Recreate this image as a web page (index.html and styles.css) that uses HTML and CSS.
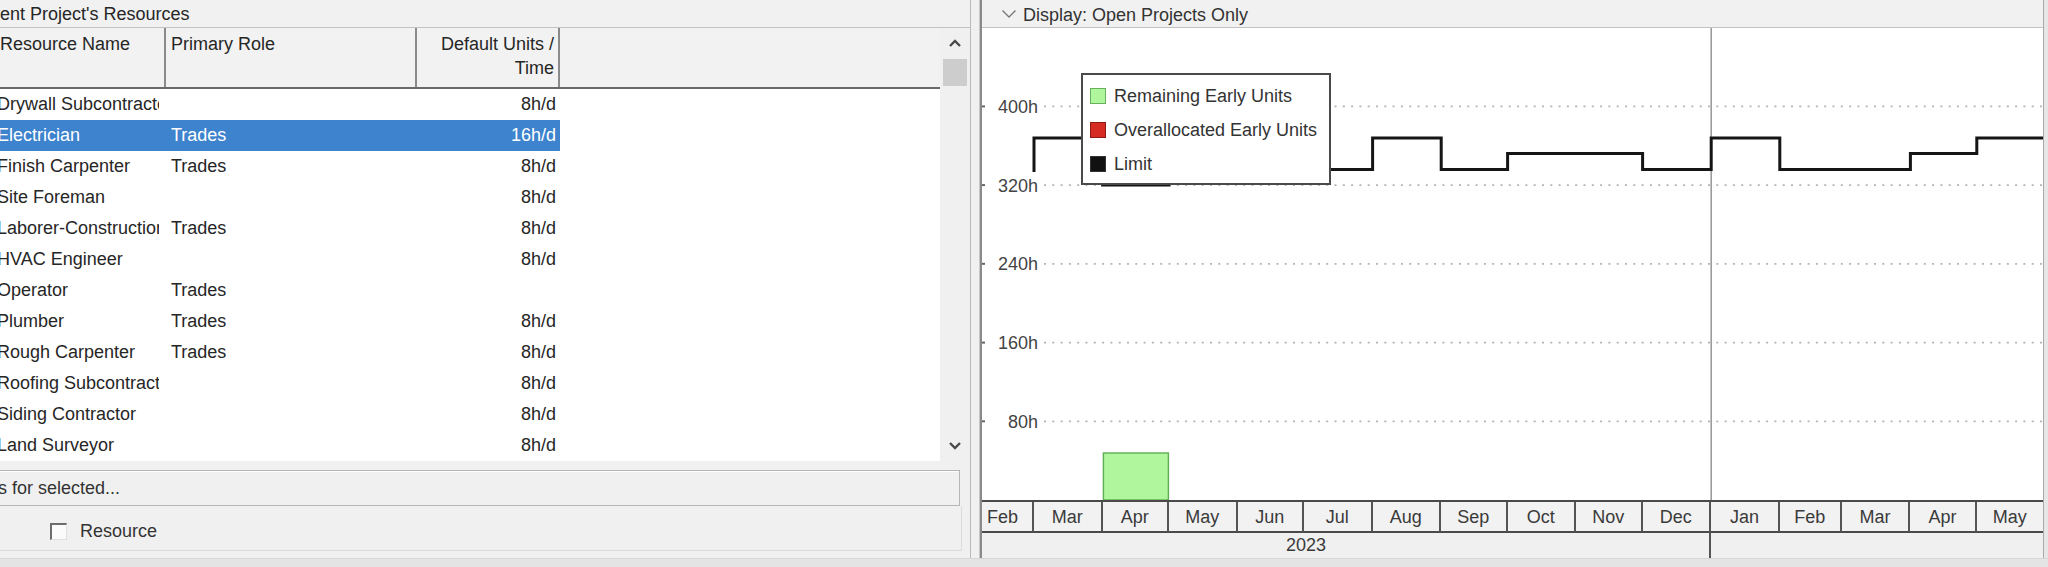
FILE: index.html
```html
<!DOCTYPE html>
<html lang="en">
<head>
    <meta charset="UTF-8">
    <title>Resource Usage Profile</title>
    <link rel="stylesheet" href="styles.css">
</head>
<body>
    <div class="app">
        <!-- left: resource list -->
        <section class="res-pane">
            <div class="pane-title"><span class="res-title">Current Project's Resources</span></div>

            <div class="grid-wrap">
                <div class="grid">
                    <div class="row head">
                        <div class="c name">Resource Name</div>
                        <div class="c role">Primary Role</div>
                        <div class="c units">Default Units /<br>Time</div>
                        <div class="c fill"></div>
                    </div>
                    <div class="row"><div class="c name"><span>Drywall Subcontractor</span></div><div class="c role"></div><div class="c units">8h/d</div></div>
                    <div class="row sel"><div class="c name"><span>Electrician</span></div><div class="c role">Trades</div><div class="c units">16h/d</div></div>
                    <div class="row"><div class="c name"><span>Finish Carpenter</span></div><div class="c role">Trades</div><div class="c units">8h/d</div></div>
                    <div class="row"><div class="c name"><span>Site Foreman</span></div><div class="c role"></div><div class="c units">8h/d</div></div>
                    <div class="row"><div class="c name"><span>Laborer-Construction</span></div><div class="c role">Trades</div><div class="c units">8h/d</div></div>
                    <div class="row"><div class="c name"><span>HVAC Engineer</span></div><div class="c role"></div><div class="c units">8h/d</div></div>
                    <div class="row"><div class="c name"><span>Operator</span></div><div class="c role">Trades</div><div class="c units"></div></div>
                    <div class="row"><div class="c name"><span>Plumber</span></div><div class="c role">Trades</div><div class="c units">8h/d</div></div>
                    <div class="row"><div class="c name"><span>Rough Carpenter</span></div><div class="c role">Trades</div><div class="c units">8h/d</div></div>
                    <div class="row"><div class="c name"><span>Roofing Subcontractor</span></div><div class="c role"></div><div class="c units">8h/d</div></div>
                    <div class="row"><div class="c name"><span>Siding Contractor</span></div><div class="c role"></div><div class="c units">8h/d</div></div>
                    <div class="row"><div class="c name"><span>Land Surveyor</span></div><div class="c role"></div><div class="c units">8h/d</div></div>
                </div>

                <div class="vscroll">
                    <div class="sb-btn">
                        <svg width="14" height="10" viewBox="0 0 14 10"><polyline points="2,8 7,3 12,8" fill="none" stroke="#4a4a4a" stroke-width="2.4"/></svg>
                    </div>
                    <div class="sb-thumb"></div>
                    <div class="sb-track"></div>
                    <div class="sb-btn">
                        <svg width="14" height="10" viewBox="0 0 14 10"><polyline points="2,2 7,7 12,2" fill="none" stroke="#4a4a4a" stroke-width="2.4"/></svg>
                    </div>
                </div>
            </div>

            <div class="sel-box"><span class="sel-text">Display Activities for selected...</span></div>

            <div class="check-box">
                <label class="check"><span class="tick"></span>Resource</label>
            </div>
        </section>

        <div class="splitter"></div>

        <!-- right: usage profile -->
        <section class="chart-pane">
            <div class="pane-title chart-title">
                <svg class="chev" width="16" height="10" viewBox="0 0 16 10"><polyline points="1.5,1.5 8,8 14.5,1.5" fill="none" stroke="#777" stroke-width="1.3"/></svg>
                Display: Open Projects Only
            </div>

            <div class="plot">
                <svg width="1061" height="472" viewBox="0 0 1061 472">
                    <g stroke="#b4b4b4" stroke-width="1.8" stroke-dasharray="2 6.3">
                        <line x1="62" y1="78.4" x2="1061" y2="78.4"/>
                        <line x1="62" y1="157.1" x2="1061" y2="157.1"/>
                        <line x1="62" y1="235.8" x2="1061" y2="235.8"/>
                        <line x1="62" y1="314.6" x2="1061" y2="314.6"/>
                        <line x1="62" y1="393.3" x2="1061" y2="393.3"/>
                    </g>
                    <g stroke="#666" stroke-width="2">
                        <line x1="0" y1="78.4" x2="3" y2="78.4"/>
                        <line x1="0" y1="157.1" x2="3" y2="157.1"/>
                        <line x1="0" y1="235.8" x2="3" y2="235.8"/>
                        <line x1="0" y1="314.6" x2="3" y2="314.6"/>
                        <line x1="0" y1="393.3" x2="3" y2="393.3"/>
                    </g>
                    <g class="ylab" text-anchor="end">
                        <text x="56" y="85">400h</text>
                        <text x="56" y="163.6">320h</text>
                        <text x="56" y="242.3">240h</text>
                        <text x="56" y="321.1">160h</text>
                        <text x="56" y="399.8">80h</text>
                    </g>
                    <!-- year boundary -->
                    <line x1="729.2" y1="0" x2="729.2" y2="472" stroke="#9c9c9c" stroke-width="1.6"/>
                    <!-- remaining early units, Apr -->
                    <rect x="121.4" y="425" width="65" height="47" fill="#aff69c" stroke="#5fae55" stroke-width="1.4"/>
                    <!-- limit -->
                    <path d="M52,144 V109.9 H120.6 V157.1 H187 V109.9 H255.6 V125.6 H322 V141.4 H390.6 V109.9 H459.2 V141.4 H525.6 V125.6 H660.6 V141.4 H729.2 V109.9 H797.8 V141.4 H928.4 V125.6 H994.8 V109.9 H1061"
                          fill="none" stroke="#151515" stroke-width="3"/>
                </svg>

                <div class="legend">
                    <div class="lg-item"><span class="sw green"></span>Remaining Early Units</div>
                    <div class="lg-item"><span class="sw red"></span>Overallocated Early Units</div>
                    <div class="lg-item"><span class="sw black"></span>Limit</div>
                </div>
            </div>

            <div class="months">
                <div class="m first">Feb</div>
                <div class="m">Mar</div>
                <div class="m">Apr</div>
                <div class="m">May</div>
                <div class="m">Jun</div>
                <div class="m">Jul</div>
                <div class="m">Aug</div>
                <div class="m">Sep</div>
                <div class="m">Oct</div>
                <div class="m">Nov</div>
                <div class="m">Dec</div>
                <div class="m">Jan</div>
                <div class="m">Feb</div>
                <div class="m">Mar</div>
                <div class="m">Apr</div>
                <div class="m last">May</div>
            </div>

            <div class="years">
                <div class="y y2023"><span class="y-label">2023</span></div>
                <div class="y"></div>
            </div>
        </section>
    </div>
    <div class="statusband"></div>
</body>
</html>
```

FILE: styles.css
```css
* {
    box-sizing: border-box;
}
body {
    margin: 0;
    width: 2048px;
    height: 567px;
    overflow: hidden;
    background: #e6e6e6;
    font-family: "Liberation Sans", Arial, sans-serif;
    font-size: 18px;
    color: #262626;
}
.app {
    display: flex;
    height: 558px;
}

/* ---- left pane ---- */
.res-pane {
    width: 971px;
    display: flex;
    flex-direction: column;
    background: #f0f0f0;
    border-right: 1px solid #b9b9b9;
    overflow: hidden;
}
.pane-title {
    height: 28px;
    line-height: 28px;
    background: #f1f1f1;
    border-bottom: 1px solid #c2c2c2;
    white-space: nowrap;
    overflow: hidden;
}
.res-title {
    display: block;
    margin-left: -35px;
}
.grid-wrap {
    display: flex;
    height: 433px;
}
.grid {
    width: 940px;
    background: #fff;
    overflow: hidden;
}
.row {
    display: grid;
    grid-template-columns: 166px 251px 143px 1fr;
    height: 31px;
    line-height: 31px;
    white-space: nowrap;
}
.row .c {
    overflow: hidden;
}
.row .name span {
    display: block;
    overflow: hidden;
    margin-left: -3px;
    margin-right: 7px;
}
.row .role {
    padding-left: 5px;
}
.row .units {
    text-align: right;
    padding-right: 4px;
}
.row.sel .c {
    background: #3d83cd;
    color: #fff;
}
.row.head {
    height: 61px;
    line-height: 24px;
    background: #f2f2f2;
    border-bottom: 2px solid #6a6a6a;
}
.row.head .c {
    padding-top: 4px;
    border-right: 2px solid #8a8a8a;
}
.row.head .fill {
    border-right: none;
}
.vscroll {
    width: 30px;
    display: flex;
    flex-direction: column;
    align-items: center;
    background: #f0f0f0;
}
.sb-btn {
    height: 30px;
    display: flex;
    align-items: center;
    justify-content: center;
}
.sb-thumb {
    width: 24px;
    height: 27px;
    margin-top: 1px;
    background: #cdcdcd;
}
.sb-track {
    flex: 1;
}
.sel-box {
    width: 960px;
    height: 36px;
    margin-top: 9px;
    line-height: 34px;
    border-top: 1px solid #b5b5b5;
    border-bottom: 1px solid #b5b5b5;
    border-right: 1px solid #b5b5b5;
    box-shadow: inset 0 1px 0 #fff;
    white-space: nowrap;
    overflow: hidden;
    color: #333;
}
.sel-text {
    display: block;
    margin-left: -127px;
}
.check-box {
    width: 962px;
    height: 45px;
    display: flex;
    align-items: center;
    padding-top: 7px;
    border-right: 1px solid #dcdcdc;
    border-bottom: 1px solid #dcdcdc;
}
.check {
    display: flex;
    align-items: center;
    margin-left: 50px;
    color: #333;
}
.tick {
    width: 17px;
    height: 17px;
    margin-right: 13px;
    background: #fbfbfb;
    border-top: 2px solid #6c6c6c;
    border-left: 2px solid #6c6c6c;
    border-right: 1px solid #e0e0e0;
    border-bottom: 1px solid #e0e0e0;
}

.splitter {
    width: 9px;
    background: #f0f0f0;
    border-right: 1px solid #c7c7c7;
}

/* ---- right pane ---- */
.chart-pane {
    width: 1064px;
    display: flex;
    flex-direction: column;
    border-left: 2px solid #8a8a8a;
    border-right: 1px solid #a9a9a9;
    background: #f0f0f0;
}
.chart-title {
    display: flex;
    align-items: center;
    gap: 6px;
    padding-left: 19px;
    padding-top: 2px;
    color: #333;
}
.chev {
    margin-top: -2px;
}
.plot {
    position: relative;
    height: 472px;
    background: #fff;
}
.plot svg {
    display: block;
}
.ylab {
    font-family: "Liberation Sans", Arial, sans-serif;
    font-size: 18px;
    fill: #444;
}
.legend {
    position: absolute;
    left: 99px;
    top: 45px;
    width: 250px;
    height: 112px;
    padding-top: 4px;
    background: #fff;
    border: 2px solid #4a4a4a;
}
.lg-item {
    display: flex;
    align-items: center;
    height: 34px;
    padding-left: 7px;
    color: #333;
    white-space: nowrap;
}
.sw {
    width: 16px;
    height: 16px;
    margin-right: 8px;
    border: 1px solid #333;
}
.sw.green {
    background: #aff69c;
    border-color: #66b15c;
}
.sw.red {
    background: #d52b22;
    border-color: #8e1b15;
}
.sw.black {
    background: #111;
}
.months {
    display: grid;
    grid-template-columns: 52px 68.6px 66.4px 68.6px 66.4px 68.6px 68.6px 66.4px 68.6px 66.4px 68.6px 68.6px 62px 68.6px 66.4px 1fr;
    height: 33px;
    border-top: 2px solid #4a4a4a;
    border-bottom: 2px solid #4a4a4a;
    background: #f2f2f2;
}
.m {
    line-height: 30px;
    text-align: center;
    color: #3a3a3a;
    border-right: 2px solid #555;
}
.m.first {
    text-align: left;
    padding-left: 5px;
}
.m.last {
    border-right: none;
}
.years {
    display: grid;
    grid-template-columns: 729.2px 1fr;
    height: 25px;
    background: #f0f0f0;
}
.y {
    line-height: 24px;
    overflow: hidden;
    color: #3a3a3a;
}
.y2023 {
    border-right: 2px solid #555;
}
.y-label {
    display: block;
    margin-left: -79px;
    text-align: center;
}
.statusband {
    height: 9px;
    background: #e4e4e4;
    border-top: 1px solid #d6d6d6;
}
```
